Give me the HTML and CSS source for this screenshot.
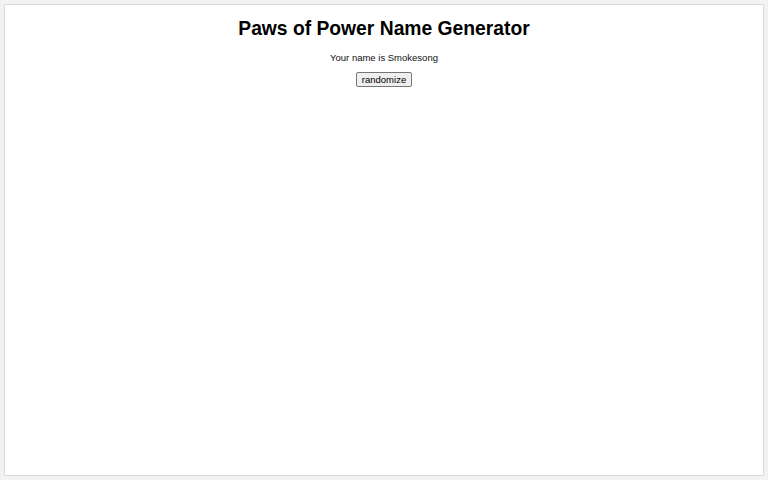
FILE: index.html
```html
<!DOCTYPE html>
<html>
<head>
<meta charset="utf-8">
<link rel="stylesheet" href="styles.css">
</head>
<body>
<main class="page">
  <h1 class="title">Paws of Power Name Generator</h1>
  <p class="name">Your name is Smokesong</p>
  <button class="btn">randomize</button>
</main>
</body>
</html>
```
FILE: styles.css
```css
html {
  background: #f2f2f2;
}
body {
  margin: 0;
  padding: 4px;
  font-family: "Liberation Sans", Arial, sans-serif;
}
.page {
  box-sizing: border-box;
  height: 472px;
  background: #fff;
  border: 1px solid #dcdcdc;
  display: flex;
  flex-direction: column;
  align-items: center;
  padding-top: 16px;
}
.title {
  margin: 0;
  font-size: 19.3px;
  font-weight: bold;
  color: #000;
  line-height: 16px;
}
.name {
  margin: 0;
  margin-top: 15px;
  font-size: 9.5px;
  line-height: 12px;
  color: #111;
}
.btn {
  margin-top: 8px;
  font-family: "Liberation Sans", Arial, sans-serif;
  font-size: 9.5px;
  line-height: 12px;
  padding: 0 4.5px;
  height: 15px;
  border: 1px solid #767676;
  border-radius: 2px;
  background: #efefef;
  color: #000;
}
```
